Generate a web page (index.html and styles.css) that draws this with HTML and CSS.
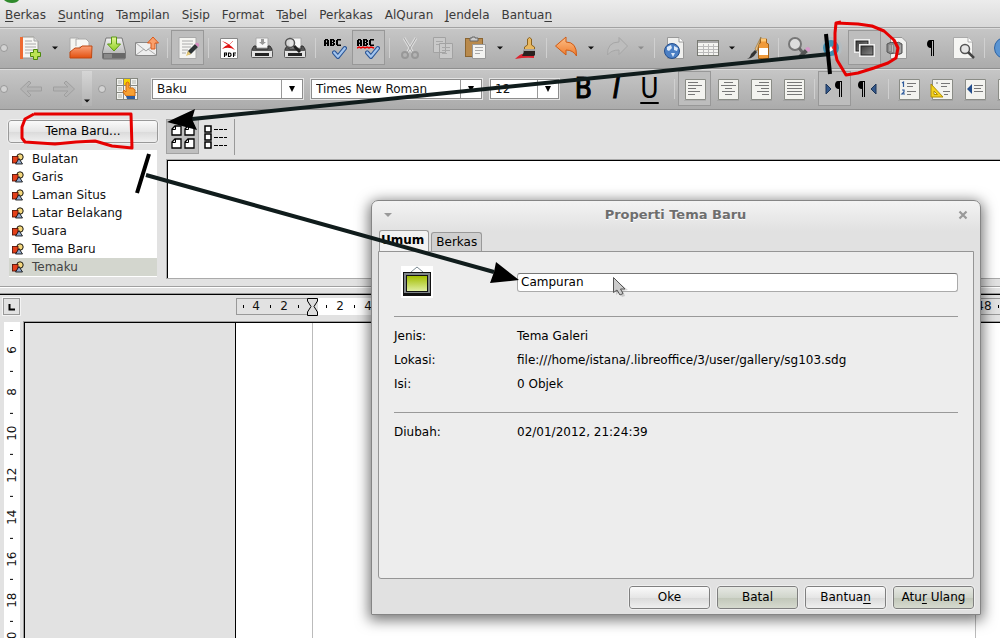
FILE: index.html
```html
<!DOCTYPE html>
<html lang="id">
<head>
<meta charset="utf-8">
<meta name="viewport" content="width=device-width, initial-scale=1">
<title>Properti Tema Baru</title>
<link rel="stylesheet" href="styles.css">
</head>
<body>
<svg class="defs" aria-hidden="true">
  <defs>
    <linearGradient id="gOrange" x1="0" y1="0" x2="0" y2="1"><stop offset="0" stop-color="#fba27a"/><stop offset="1" stop-color="#e2500f"/></linearGradient>
    <linearGradient id="gUndo" x1="0" y1="0" x2="0" y2="1"><stop offset="0" stop-color="#fcc08a"/><stop offset="1" stop-color="#ee7a2a"/></linearGradient>
    <linearGradient id="gGreen" x1="0" y1="0" x2="0" y2="1"><stop offset="0" stop-color="#e4f59a"/><stop offset="1" stop-color="#8fd022"/></linearGradient>
    <linearGradient id="gMetal" x1="0" y1="0" x2="0" y2="1"><stop offset="0" stop-color="#f2f2f2"/><stop offset="1" stop-color="#a4a4a4"/></linearGradient>
    <linearGradient id="gDark" x1="0" y1="0" x2="1" y2="1"><stop offset="0" stop-color="#3a3a3a"/><stop offset="1" stop-color="#8a8a8a"/></linearGradient>
    <linearGradient id="gLime" x1="0" y1="0" x2="0" y2="1"><stop offset="0" stop-color="#a2bd00"/><stop offset="1" stop-color="#dfeea0"/></linearGradient>
    <symbol id="shapes" viewBox="0 0 12 12"><circle cx="8" cy="4" r="3.200" fill="#f4d77c" stroke="#000" stroke-width=".9"/><rect x=".5" y="3.500" width="5.500" height="6.500" fill="#e4401a" stroke="#5a1408" stroke-width=".9"/><path d="M7 5.500L10.500 11H3.500Z" fill="#8fa8cc" stroke="#000" stroke-width=".8"/></symbol>
    <symbol id="check" viewBox="0 0 14 12"><path d="M2 6L5.500 10L12 2" fill="none" stroke="#2a5596" stroke-width="4" stroke-linecap="round" stroke-linejoin="round"/><path d="M2 6L5.500 10L12 2" fill="none" stroke="#a3c5ee" stroke-width="2" stroke-linecap="round" stroke-linejoin="round"/></symbol>
    <symbol id="abc" viewBox="0 0 18 7"><g fill="#000"><path d="M1 0H4V1H5V7H3V5H2V7H0V1H1ZM2 1.500V3.500H3V1.500Z" fill-rule="evenodd"/><path d="M6 0H10V1H11V3H10V4H11V6H10V7H6ZM8 1.500V3H9V1.500ZM8 4V5.500H9V4Z" fill-rule="evenodd"/><path d="M13 0H17V1.500H14V5.500H17V7H13V6H12V1H13Z"/></g></symbol>
    <symbol id="page" viewBox="0 0 24 24"><path d="M2.500 2.500H22.500V22.500H2.500Z" fill="#f3f3ef" stroke="#8a8c86"/><path d="M1 24H23" stroke="#000" stroke-opacity=".15"/></symbol>
    <symbol id="tri" viewBox="0 0 6 4"><path d="M0 .5H6L3 3.500Z" fill="currentColor"/></symbol>
    <symbol id="drop" viewBox="0 0 8 6"><path d="M1 0H7L4 6Z" fill="#000"/></symbol>
    <symbol id="pilcrow" viewBox="0 0 8 16"><path d="M3 0H7V16H6V1H5V16H4V8C1 8 0 6 0 4S1 0 3 0Z" fill="#000"/></symbol>
    <symbol id="printer" viewBox="0 0 24 24"><path d="M6 2H18V12H6Z" fill="#f8f8f8" stroke="#aaa"/><path d="M4 10L2 13V16H22V13L20 10H18V13H6V10Z" fill="#555" stroke="#333"/><rect x="1.500" y="14.500" width="21" height="7" rx="1" fill="#e2e2e2" stroke="#555"/><rect x="5" y="17" width="14" height="3" fill="#222"/></symbol>
    <symbol id="thumb" viewBox="0 0 11 11"><path d="M1 4L4 1H10V10H1Z" fill="#fff" stroke="#000" stroke-width="1.300"/><path d="M1 4.500H4.500V1" fill="none" stroke="#000"/></symbol>
  </defs>
</svg>

<nav class="menubar" aria-label="Menu">
  <svg class="app-mark" viewBox="0 0 18 4" aria-hidden="true"><path d="M0 0H15Q13 3 8 3T0 0Z" fill="#2f8a2c"/></svg>
  <a href="#"><u>B</u>erkas</a><a href="#"><u>S</u>unting</a><a href="#">Ta<u>m</u>pilan</a><a href="#">S<u>i</u>sip</a><a href="#">F<u>o</u>rmat</a><a href="#">T<u>a</u>bel</a><a href="#">Per<u>k</u>akas</a><a href="#">AlQuran</a><a href="#"><u>J</u>endela</a><a href="#">Bantua<u>n</u></a>
</nav>

<div class="toolbar" role="toolbar" aria-label="Standar">
  <span class="grip"></span>
  <button class="tool" aria-label="Baru"><svg viewBox="0 0 24 24"><path d="M3 1H15L19 5V22H3Z" fill="#f6f6f3" stroke="#9a9a95"/><path d="M1 1H4V23H1Z" fill="#ee6a32"/><path d="M15 1V5H19" fill="#ddd" stroke="#aaa"/><path d="M6 5H13M6 8H17M6 11H17M6 14H14M6 17H12" stroke="#aaa"/><path d="M14.500 13.500H18.500V16.500H21.500V20.500H18.500V23.500H14.500V20.500H11.500V16.500H14.500Z" fill="#bce254" stroke="#4d8a0c"/></svg></button>
  <button class="arrow" aria-label="Pilihan baru"><svg><use href="#tri"/></svg></button>
  <button class="tool" aria-label="Buka"><svg viewBox="0 0 24 24"><path d="M1 22V2H9L11 4V10" fill="#f4f4f0" stroke="#aaa"/><path d="M7 10V3H17L20 6V10" fill="#f8f8f5" stroke="#aaa"/><path d="M1 22V16L6 12H11L13 10H23L22.500 22Z" fill="url(#gOrange)" stroke="#c04812"/></svg></button>
  <button class="tool" aria-label="Simpan"><svg viewBox="0 0 24 24"><path d="M4 2H20L23.500 16V22Q23 23 22 23H2Q.5 23 .5 22V16Z" fill="url(#gMetal)" stroke="#777"/><rect x="1" y="17" width="22" height="5.500" fill="#686868"/><path d="M3 18V22M5 18V22M7 18V22M9 18V22" stroke="#aaa"/><path d="M9.500 1H14.500V8H18.500L12 15L5.500 8H9.500Z" fill="url(#gGreen)" stroke="#5a9a12"/></svg></button>
  <button class="tool" aria-label="Kirim surel"><svg viewBox="0 0 24 24"><path d="M.5 6.500H21.500V19.500H.5Z" fill="#eee" stroke="#888"/><path d="M1 19L9 13L11 15L13 13L21 19M1 7L11 15L21 7" fill="none" stroke="#aaa"/><path d="M16 13V7H12.500L18 1L23.500 7H20V13Z" fill="#f9a06c" stroke="#d95a1c"/></svg></button>
  <span class="sep"></span>
  <button class="tool on" aria-pressed="true" aria-label="Sunting berkas"><svg viewBox="0 0 24 24"><path d="M3 1.500H20V22.500H3Z" fill="#f5f5f2" stroke="#aaa"/><path d="M6 5H17M6 8H17M6 11H15M6 14H12M6 17H10" stroke="#aaa"/><path d="M11 19L12 15L19 8L22 11L15 18Z" fill="#2e3436"/><path d="M19 8L20 7Q22 6 23 8T22 11Z" fill="#d68cc0"/><path d="M10 20L12 15L15 18Z" fill="#e6c873"/></svg></button>
  <span class="sep"></span>
  <button class="tool" aria-label="Ekspor PDF"><svg viewBox="0 0 24 24"><path d="M3.500 2.500H20.500V22.500H3.500Z" fill="#fff" stroke="#888"/><path d="M5 5Q12 7 18 14Q12 10 5 13Q9 9 11 9Z" fill="#e01010"/><path d="M12 9L16 5" stroke="#e88" stroke-width="1"/><path d="M7.500 21V17H9.500V19H7.500M11.500 17V20.500H13L14 19.500V18L13 17ZM16.500 21V17H19M16.500 19H18.500" fill="none" stroke="#000" stroke-width="1.100"/></svg></button>
  <button class="tool" aria-label="Cetak"><svg viewBox="0 0 24 24"><use href="#printer"/><path d="M11 3H14V6H16L12.500 9L9 6H11Z" fill="#999"/></svg></button>
  <button class="tool" aria-label="Pratinjau"><svg viewBox="0 0 24 24"><use href="#printer"/><circle cx="7" cy="7" r="4.500" fill="#ddd" fill-opacity=".8" stroke="#555" stroke-width="1.500"/><path d="M11 10L17 16" stroke="#222" stroke-width="3"/></svg></button>
  <span class="sep"></span>
  <button class="tool" aria-label="Periksa ejaan"><svg viewBox="0 0 24 24"><use href="#abc" x="0" y="3" width="18" height="7"/><use href="#check" x="8" y="10" width="15" height="13"/></svg></button>
  <button class="tool on" aria-pressed="true" aria-label="Periksa otomatis"><svg viewBox="0 0 24 24"><use href="#abc" x="0" y="3" width="18" height="7"/><path d="M0 12L2 11L4 12L6 11L8 12L10 11L12 12L14 11L17 12" fill="none" stroke="#e00" stroke-width="1.500"/><use href="#check" x="8" y="10" width="15" height="13"/></svg></button>
  <span class="sep"></span>
  <button class="tool" disabled aria-label="Potong"><svg viewBox="0 0 24 24"><path d="M6 2L15 17M18 2L9 17" stroke="#ddd" stroke-width="3"/><path d="M6 2L15 17M18 2L9 17" stroke="#a4a4a4"/><g fill="none" stroke="#989898" stroke-width="2"><circle cx="7" cy="19" r="3"/><circle cx="17" cy="19" r="3"/></g></svg></button>
  <button class="tool" disabled aria-label="Salin"><svg viewBox="0 0 24 24"><path d="M2.500 1.500H14.500V16.500H2.500ZM8.500 7.500H21.500V22.500H8.500Z" fill="#c9c9c9" stroke="#a2a2a2"/><path d="M5 5.500H12M5 8.500H8M11 11.500H19M11 14.500H19M11 17.500H16" stroke="#a8a8a8"/></svg></button>
  <button class="tool" aria-label="Tempel"><svg viewBox="0 0 24 24"><rect x="1.500" y="2.500" width="17" height="18" fill="#b98a4c" stroke="#8a6430"/><path d="M6 4V2H8V1H11V2H14V5H6Z" fill="#ccc" stroke="#666"/><path d="M8.500 8.500H21.500V22.500H8.500Z" fill="#f4f4f2" stroke="#999"/><path d="M11 11.500H19M11 14.500H19M11 17.500H16" stroke="#aaa"/></svg></button>
  <button class="arrow" aria-label="Pilihan tempel"><svg><use href="#tri"/></svg></button>
  <button class="tool" aria-label="Kuas format"><svg viewBox="0 0 24 24"><path d="M1 23Q7 17 11 18H20V22Q12 21 1 23Z" fill="#dc2430"/><path d="M13.500 9V3Q15.500 0 17.500 3V9L20.500 11V14H10.500V11Z" fill="#e8b860" stroke="#8a6220"/><path d="M10 13H21V19L20 20H8Q10 17 10 13Z" fill="#2a2220"/><path d="M10 14H21" stroke="#ccc" stroke-width="1.500"/></svg></button>
  <span class="sep"></span>
  <button class="tool" aria-label="Batalkan"><svg viewBox="0 0 24 24"><path d="M.5 10L11 1V6Q22 6 21.500 20Q18 14 11 14V19Z" fill="url(#gUndo)" stroke="#cf5a14"/></svg></button>
  <button class="arrow" aria-label="Riwayat batal"><svg><use href="#tri"/></svg></button>
  <button class="tool" disabled aria-label="Ulangi"><svg viewBox="0 0 24 24"><path d="M22.500 10L14 1.500V6Q2 6 2.500 19Q6 14 14 14V18.500Z" fill="#bdbdbd" stroke="#a6a6a6"/></svg></button>
  <button class="arrow" disabled aria-label="Riwayat ulang"><svg><use href="#tri"/></svg></button>
  <span class="sep"></span>
  <button class="tool" aria-label="Taut"><svg viewBox="0 0 24 24"><path d="M4.500 1.500H16L20.500 6V22.500H4.500Z" fill="#f0f0ee" stroke="#999"/><path d="M16 1.500V6H20.500" fill="#fff" stroke="#999"/><circle cx="9" cy="15" r="7.500" fill="#4b7fc4" stroke="#244e8c"/><path d="M4 11L8 9L9 12L6 15L4 14ZM11 10L15 12L14 15L11 14ZM8 17L12 17L10 21Z" fill="#dce9f8"/></svg></button>
  <button class="tool" aria-label="Tabel"><svg viewBox="0 0 24 24"><rect x="1.500" y="4.500" width="21" height="15" fill="#f4f4f1" stroke="#777972"/><path d="M2 6H22" stroke="#aaa" stroke-width="2"/><path d="M2 10.500H22M2 13.500H22M2 16.500H22M7.500 8V19M12.500 8V19M17.500 8V19" stroke="#bbb"/></svg></button>
  <button class="arrow" aria-label="Pilihan tabel"><svg><use href="#tri"/></svg></button>
  <button class="tool" aria-label="Menggambar"><svg viewBox="0 0 24 24"><path d="M12.500 22.500V8L14.500 7V3H20.500V7L22.500 8V22.500Z" fill="#f09a3a" stroke="#a06018"/><path d="M13 12H22V19H13Z" fill="#fff"/><path d="M15 4H20" stroke="#ffc875" stroke-width="3"/><path d="M11 15L15 1L9 13Z" fill="#f0c080" stroke="#8a6a30" stroke-width=".6"/><path d="M1 23Q4 22 5 18L9 14L11 16L8 20Q5 23 1 23Z" fill="#333"/></svg></button>
  <span class="sep"></span>
  <button class="tool" aria-label="Cari"><svg viewBox="0 0 24 24"><circle cx="8" cy="8" r="6" fill="#dcdcdc" stroke="#777" stroke-width="2"/><path d="M12 12L16 17" stroke="#666" stroke-width="3"/><path d="M11 22L12 19L18 13L21 16L15 21Z" fill="#555"/><path d="M18 13L20 11Q24 11 23 15L21 16Z" fill="#d49ac8"/></svg></button>
  <button class="tool" aria-label="Navigator"><svg viewBox="0 0 24 24"><circle cx="11" cy="12" r="9.500" fill="#3f8fb0" stroke="#b4bcc0" stroke-width="3"/><path d="M11 12L17 6L13 14Z" fill="#e33"/><path d="M11 10L6 18L13 14Z" fill="#fff"/></svg></button>
  <button class="tool on" aria-pressed="true" aria-label="Galeri"><svg viewBox="0 0 24 24"><rect x="1.500" y="3.500" width="15" height="13" fill="#fff" stroke="#eee"/><rect x="3" y="5" width="12" height="10" fill="url(#gDark)" stroke="#222"/><rect x="6.500" y="8.500" width="15" height="12" fill="#fff" stroke="#eee"/><rect x="8" y="10" width="12" height="9" fill="url(#gDark)" stroke="#222"/></svg></button>
  <button class="tool" aria-label="Sumber data"><svg viewBox="0 0 24 24"><path d="M4.500 1.500H16L20.500 6V22.500H4.500Z" fill="#f1f1ef" stroke="#999"/><path d="M1 8Q5 5 9 7Q13 5 16 8V17Q13 20 9 17Q4 19 1 16Z" fill="#8a8a8a" stroke="#555"/><path d="M9 8V17M4 9V15M6.500 9V16M11.500 9V17M14 9V17" stroke="#bbb"/></svg></button>
  <button class="tool" aria-label="Karakter tak tercetak"><svg viewBox="0 0 24 24"><use href="#pilcrow" x="8" y="4" width="8" height="16"/></svg></button>
  <button class="tool" aria-label="Zum"><svg viewBox="0 0 24 24"><path d="M1.500 1.500H16L20.500 6V22.500H1.500Z" fill="#f5f5f3" stroke="#aaa"/><path d="M16 1.500V6H20.500" fill="#fff" stroke="#aaa"/><circle cx="13" cy="13" r="4.500" fill="#e6e6e6" stroke="#555" stroke-width="1.500"/><path d="M16 16L22 22" stroke="#444" stroke-width="2.500"/></svg></button>
  <span class="sep"></span>
  <button class="tool" aria-label="Bantuan"><svg viewBox="0 0 24 24"><circle cx="12" cy="12" r="10.500" fill="#5a94d2" stroke="#2f64a4"/></svg></button>
</div>

<div class="toolbar" role="toolbar" aria-label="Pemformatan">
  <span class="grip"></span>
  <button class="tool" disabled aria-label="Mundur"><svg viewBox="0 0 24 24"><path d="M1.500 12L10 4L12 6L8 10H22.500V14H8L12 18L10 20Z" fill="#b4b4b4" stroke="#9f9f9f"/></svg></button>
  <button class="tool" disabled aria-label="Maju"><svg viewBox="0 0 24 24"><path d="M22.500 12L14 4L12 6L16 10H1.500V14H16L12 18L14 20Z" fill="#b4b4b4" stroke="#9f9f9f"/></svg></button>
  <button class="more" aria-label="Lainnya"><svg><use href="#tri"/></svg></button>
  <span class="grip inner"></span>
  <button class="tool" aria-label="Gaya"><svg viewBox="0 0 24 24"><rect x="1.500" y="1.500" width="21" height="21" fill="#f2f2ef" stroke="#858780"/><path d="M8.500 2V22M15.500 2V22M2 8.500H22M2 15.500H22" stroke="#858780"/><g fill="#d2d4ce"><path d="M3 3H7V7H3ZM3 10H7V14H3ZM3 17H7V21H3ZM17 3H21V7H17ZM17 10H21V14H17Z"/></g><path d="M9 2H15V8H9Z" fill="#f5d400"/><path d="M11 19L8 15L9 13L11 15V6Q12.500 4 14 6V11Q18 10 20 13V19Z" fill="#f7a032" stroke="#d06a10"/><path d="M11 19H20V22H12Z" fill="#2d5a9c"/></svg></button>
  <span class="combo style"><select aria-label="Gaya paragraf"><option>Baku</option></select><svg><use href="#drop"/></svg></span>
  <span class="combo font"><select aria-label="Nama fonta"><option>Times New Roman</option></select><svg><use href="#drop"/></svg></span>
  <span class="combo size"><select aria-label="Ukuran fonta"><option>12</option></select><svg><use href="#drop"/></svg></span>
  <button class="tool glyph bold">B</button>
  <button class="tool glyph italic">I</button>
  <button class="tool glyph underline">U</button>
  <span class="sep"></span>
  <button class="tool on" aria-pressed="true" aria-label="Rata kiri"><svg viewBox="0 0 24 24"><use href="#page"/><path d="M5 5.500H15M5 8.500H19M5 11.500H13M5 14.500H17M5 17.500H12" stroke="#777"/></svg></button>
  <button class="tool" aria-label="Rata tengah"><svg viewBox="0 0 24 24"><use href="#page"/><path d="M8 5.500H17M5 8.500H20M9 11.500H16M6 14.500H19M9 17.500H16" stroke="#777"/></svg></button>
  <button class="tool" aria-label="Rata kanan"><svg viewBox="0 0 24 24"><use href="#page"/><path d="M10 5.500H20M6 8.500H20M12 11.500H20M8 14.500H20M13 17.500H20" stroke="#777"/></svg></button>
  <button class="tool" aria-label="Rata penuh"><svg viewBox="0 0 24 24"><use href="#page"/><path d="M5 5.500H20M5 8.500H20M5 11.500H20M5 14.500H20M5 17.500H20" stroke="#777"/></svg></button>
  <span class="sep"></span>
  <button class="tool on" aria-pressed="true" aria-label="Kiri ke kanan"><svg viewBox="0 0 24 24"><path d="M3 7L8 12L3 17Z" fill="#34598c" stroke="#1c3558"/><use href="#pilcrow" x="12" y="4" width="8" height="16"/></svg></button>
  <button class="tool" aria-label="Kanan ke kiri"><svg viewBox="0 0 24 24"><path d="M20 7L15 12L20 17Z" fill="#34598c" stroke="#1c3558"/><use href="#pilcrow" x="2" y="4" width="8" height="16"/></svg></button>
  <span class="sep"></span>
  <button class="tool" aria-label="Penomoran"><svg viewBox="0 0 24 24"><use href="#page"/><path d="M5 6L6.500 5V10M5 13H7V15L5 17H8" fill="none" stroke="#2d5a9c" stroke-width="1.200"/><path d="M10 6.500H19M10 9.500H16M10 14.500H19M10 17.500H14" stroke="#777"/></svg></button>
  <button class="tool" aria-label="Bulir"><svg viewBox="0 0 24 24"><use href="#page"/><path d="M11 6.500H20M11 9.500H17M13 14.500H20M14 17.500H18M6 6H8" stroke="#777"/><path d="M1 7V20H13ZM4 14V17.500H7.500Z" fill="#f4d21c" fill-rule="evenodd" stroke="#b18f05"/></svg></button>
  <button class="tool" aria-label="Kurangi indentasi"><svg viewBox="0 0 24 24"><use href="#page"/><path d="M9 7V17L4 12Z" fill="#244e8c"/><path d="M11 8.500H20M11 11.500H18M11 14.500H20" stroke="#777"/></svg></button>
  <button class="tool" aria-label="Tambah indentasi"><svg viewBox="0 0 24 24"><use href="#page"/></svg></button>
</div>

<section class="gallery" aria-label="Galeri">
  <div class="themes">
    <button class="push new-theme">Tema Baru...</button>
    <ul class="theme-list">
      <li><svg><use href="#shapes"/></svg>Bulatan</li>
      <li><svg><use href="#shapes"/></svg>Garis</li>
      <li><svg><use href="#shapes"/></svg>Laman Situs</li>
      <li><svg><use href="#shapes"/></svg>Latar Belakang</li>
      <li><svg><use href="#shapes"/></svg>Suara</li>
      <li><svg><use href="#shapes"/></svg>Tema Baru</li>
      <li class="selected"><svg><use href="#shapes"/></svg>Temaku</li>
    </ul>
  </div>
  <div class="browser">
    <div class="views">
      <button class="view on" aria-pressed="true" aria-label="Tampilan ikon"><svg viewBox="0 0 26 26"><use href="#thumb" x="1" y="1" width="11" height="11"/><use href="#thumb" x="14" y="1" width="11" height="11"/><use href="#thumb" x="1" y="14" width="11" height="11"/><use href="#thumb" x="14" y="14" width="11" height="11"/></svg></button>
      <button class="view" aria-label="Tampilan rinci"><svg viewBox="0 0 26 26"><path d="M2 2H8V8H2ZM2 10H8V16H2ZM2 18H8V24H2Z" fill="#fff" stroke="#000" stroke-width="1.500"/><path d="M11 5.500H24M11 13.500H24M11 21.500H24" stroke="#000" stroke-dasharray="4 1"/></svg></button>
      <span class="rule"></span>
    </div>
    <div class="preview"></div>
  </div>
</section>
<div class="splitter"></div>

<main class="editor">
  <button class="corner" aria-label="Tabulasi"><svg viewBox="0 0 8 8"><path d="M1.500 1V6.500H7" fill="none" stroke="#000" stroke-width="2"/></svg></button>
  <div class="hruler">
    <div class="margin"><i></i><b>4</b><i></i><b>2</b><i></i></div>
    <svg class="indent" viewBox="0 0 11 18"><path d="M.5.5H10.500V3L7 8.500L10.500 14V17.500H.5V14L4 8.500L.5 3Z" fill="#ddd" stroke="#000"/></svg>
    <div class="measure"><i></i><b>2</b><i></i><b>4</b></div>
    <div class="margin end"><b>48</b><i></i></div>
  </div>
  <div class="vruler"><i class="first"></i><b>6</b><i></i><b>8</b><i></i><b>10</b><i></i><b>12</b><i></i><b>14</b><i></i><b>16</b><i></i><b>18</b><i></i><b class="last"><span>20</span></b></div>
  <div class="canvas"><div class="sheet"><div class="text-area"></div></div></div>
</main>

<section class="dialog" role="dialog" aria-labelledby="dlg-title">
  <header class="titlebar">
    <button aria-label="Menu jendela"><svg viewBox="0 0 10 10"><path d="M1 3H9L5 7Z" fill="#999"/></svg></button>
    <h1 id="dlg-title">Properti Tema Baru</h1>
    <button aria-label="Tutup"><svg viewBox="0 0 10 10"><path d="M1.500 1.500L8.500 8.500M8.500 1.500L1.500 8.500" stroke="#999" stroke-width="2.200"/></svg></button>
  </header>
  <div class="tabs" role="tablist">
    <button class="tab active" role="tab" aria-selected="true">Umum</button>
    <button class="tab" role="tab" aria-selected="false">Berkas</button>
  </div>
  <div class="pane">
    <div class="name-row">
      <svg class="picture" viewBox="0 0 32 32"><rect width="32" height="32" fill="#fff"/><path d="M10 6L16 1L22 6" fill="none" stroke="#7b8a92"/><rect x="2" y="6" width="28" height="24" fill="#111"/><rect x="3" y="7" width="26" height="20" fill="#80868a"/><rect x="5" y="9" width="22" height="17" fill="#111"/><rect x="6" y="10" width="20" height="15" fill="url(#gLime)"/></svg>
      <input type="text" value="Campuran" aria-label="Nama tema">
    </div>
    <dl class="facts"><dt>Jenis:</dt><dd>Tema Galeri</dd><dt>Lokasi:</dt><dd>file:///home/istana/.libreoffice/3/user/gallery/sg103.sdg</dd><dt>Isi:</dt><dd>0 Objek</dd></dl>
    <dl class="facts"><dt>Diubah:</dt><dd>02/01/2012, 21:24:39</dd></dl>
  </div>
  <footer class="actions">
    <button class="push">Oke</button>
    <button class="push tinted">Batal</button>
    <button class="push">Bantua<u>n</u></button>
    <button class="push tinted">Atu<u>r</u> Ulang</button>
  </footer>
</section>

<svg class="notes" viewBox="0 0 1000 638" aria-hidden="true">
  <path d="M830 54L192 119M146 175L494 272" stroke="#101c1c" stroke-width="4"/>
  <path d="M826 34L830 74M149 154L137 193" stroke="#000" stroke-width="4"/>
  <path d="M167 122L195 109L192 119L197 130ZM519 280L496 262L494 272L490 283Z" fill="#000"/>
  <g fill="none" stroke="#e60000" stroke-width="3" stroke-linejoin="round">
    <path d="M841 22L836 23L835 33V51L837 60L840 65L846 75L858 73L874 68L888 63L896 58L898 48L894 40L884 31L872 26L858 24L836 23"/>
    <path d="M34 114L131 114L132 148L112 146L95 141L76 142L55 144L40 143L25 142L22 138L22 127L25 119L34 114"/>
  </g>
  <path d="M616 280V295L619 292L622 297L625 296L623 291L628 290Z" fill="#777" fill-opacity=".3"/>
  <path d="M613.500 277.500V292.500L617 290L620 295L623 293.500L620.500 289H625Z" fill="#ccc" stroke="#555"/>
</svg>
</body>
</html>
```
FILE: styles.css
```css
* { box-sizing: border-box; }

html { height: 100%; }

body {
  margin: 0;
  min-height: 100%;
  height: 100vh;
  display: flex;
  flex-direction: column;
  position: relative;
  overflow: hidden;
  background: #e2e2e2;
  color: #111;
  font: 12px/18px "DejaVu Sans", sans-serif;
}

button, input, select { font: inherit; color: inherit; margin: 0; }
button { padding: 0; border: 0; background: none; }
svg { display: block; }
.defs { position: absolute; width: 0; height: 0; }

.menubar {
  flex: none;
  position: relative;
  display: flex;
  gap: 12px;
  height: 28px;
  padding: 6px 5px 0;
  background: linear-gradient(#ececec, #d9d9d9);
  border-bottom: 1px solid #a2a2a2;
}
.menubar a { color: #3a3a3a; text-decoration: none; }
.app-mark { position: absolute; left: 4px; top: 0; width: 18px; height: 4px; }
u { text-underline-offset: 2px; }

.toolbar {
  flex: none;
  display: flex;
  align-items: center;
  height: 41px;
  padding-bottom: 2px;
  border-top: 1px solid #dcdcdc;
  border-bottom: 1px solid #8e8e8e;
  background: linear-gradient(#c6c6c6, #ababab);
  overflow: hidden;
}
.toolbar > * { flex: none; }
.grip { width: 14px; }
.grip::before {
  content: "";
  display: block;
  width: 6px;
  height: 6px;
  border-radius: 50%;
  background: #d2d2d2;
  border: 1px solid #989898;
}
.grip.inner { width: 12px; margin-left: 6px; }
.tool {
  width: 33px;
  height: 35px;
  display: flex;
  align-items: center;
  justify-content: center;
}
.tool svg { width: 24px; height: 24px; }
.tool.on { background: #bdbdbd; border: 1px solid #989898; }
.arrow { width: 17px; height: 35px; padding-left: 5px; color: #111; }
.arrow:disabled { color: #8c8c8c; }
.arrow svg, .more svg { width: 6px; height: 4px; }
.sep { width: 8px; height: 20px; }
.sep::before { content: ""; display: block; width: 1px; height: 20px; margin-left: 4px; background: #d0d0d0; }
.more {
  width: 10px;
  height: 35px;
  margin-left: 2px;
  padding: 24px 2px 0;
  background: linear-gradient(#d6d6d6, #b2b2b2);
}

.combo {
  position: relative;
  height: 20px;
  margin-right: 8px;
  border: 1px solid #8c8c8c;
  outline: 1px solid #e4e4e4;
  background: #fff;
}
.combo select {
  appearance: none;
  width: 100%;
  height: 18px;
  padding: 0 22px 0 4px;
  border: 0;
  border-radius: 0;
  background: none;
}
.combo svg { position: absolute; right: 6px; top: 6px; width: 8px; height: 6px; }
.combo::after {
  content: "";
  position: absolute;
  right: 20px;
  top: 0;
  bottom: 0;
  width: 1px;
  background: #999;
}
.combo.style { width: 151px; margin-left: 9px; }
.combo.font { width: 171px; }
.combo.size { width: 69px; }

.glyph { font-family: "DejaVu Sans Condensed", "DejaVu Sans", sans-serif; font-size: 28px; line-height: 35px; color: #000; }
.bold, .italic { -webkit-text-stroke: 1px #000; }
.italic { font-style: oblique; }
.underline { text-decoration: underline 2px; text-underline-offset: 4px; margin-right: 4px; }

.gallery {
  flex: none;
  display: grid;
  grid-template-columns: 150px 1fr;
  gap: 8px;
  height: 176px;
  padding: 9px 0 8px 8px;
}
.push {
  height: 23px;
  padding-bottom: 2px;
  border: 1px solid #7f7f7f;
  border-radius: 3px;
  outline: 1px solid #efefef;
  background: linear-gradient(#fafafa, #e6e6e6 50%, #dadada 51%, #efefef);
  color: #000;
}
.push.tinted { background: linear-gradient(#e6e8e3, #d0d5cb 50%, #c1c7b9 51%, #d6dacf); }
.themes { display: flex; flex-direction: column; gap: 7px; padding-top: 1px; }
.new-theme { width: 100%; border-color: #999; }
.theme-list { margin: 0 1px; padding: 0 0 1px; list-style: none; background: #fff; }
.theme-list li { display: flex; align-items: center; gap: 8px; padding-left: 3px; height: 18px; }
.theme-list svg { width: 12px; height: 12px; }
.theme-list .selected { background: #d3d6ce; color: #444; }

.browser { display: flex; flex-direction: column; gap: 5px; }
.views { display: flex; height: 36px; }
.view { width: 33px; height: 35px; display: flex; align-items: center; justify-content: center; }
.view svg { width: 26px; height: 26px; }
.view.on { background: #bfbfbf; border: 1px solid #a2a2a2; }
.rule { width: 1px; margin-left: 2px; background: #999; }
.preview { flex: 1; margin-left: 1px; background: #fff; border: solid #000; border-width: 1px 0 0 1px; outline: 1px solid #aaa; }

.splitter { flex: none; height: 9px; border: solid #000; border-width: 0 0 1px; box-shadow: inset 0 1px #a0a0a0, inset 0 2px #fff, inset 0 -1px #999; }

.editor {
  flex: 1;
  min-height: 0;
  display: grid;
  grid-template: 18px 1fr / 18px 1fr;
  gap: 6px 3px;
  padding: 3px 0 0 3px;
}
.corner { width: 17px; height: 17px; display: flex; align-items: center; justify-content: center; border: 1px solid #999; outline: 1px solid #f4f4f4; }
.corner svg { width: 8px; height: 8px; }
.hruler { display: flex; height: 17px; padding-left: 212px; line-height: 17px; }
.hruler b, .hruler i { flex: none; width: 14px; display: flex; justify-content: center; align-items: center; }
.hruler i::before { content: ""; width: 1px; height: 3px; background: #000; }
b, i { font-weight: normal; font-style: normal; }
.margin { display: flex; flex: none; width: 71px; border: 1px solid #999; border-right: 0; }
.margin i:first-child { width: 12px; }
.indent { flex: none; width: 11px; height: 18px; }
.measure { flex: 1; display: flex; padding-left: 1px; background: #fff; }
.margin.end { width: 24px; overflow: hidden; }
.vruler { margin-left: 1px; width: 16px; display: flex; flex-direction: column; background: #fff; overflow: hidden; }
.vruler b, .vruler i { flex: 1 1 0; min-height: 0; display: flex; align-items: center; justify-content: center; writing-mode: vertical-rl; transform: rotate(180deg); line-height: 16px; }
.vruler i::before { content: ""; width: 3px; height: 1px; background: #000; }
.vruler .first { flex: 0 0 18px; }
.vruler .last { flex: 0 0 6px; justify-content: flex-end; overflow: hidden; }
.canvas { padding-left: 210px; border: solid #000; border-width: 1px 0 0 1px; outline: 1px solid #a0a0a0; }
.sheet { height: 100%; background: #fff; border-left: 1px solid #000; padding: 0 24px 0 76px; }
.text-area { height: 100%; border: solid #bbb; border-width: 0 1px; }

.dialog {
  position: absolute;
  left: 371px;
  right: 19px;
  top: 200px;
  padding: 0 6px 5px;
  border: 1px solid #858585;
  border-radius: 7px 7px 0 0;
  background: linear-gradient(#f3f3f3, #e1e1e1 30px);
  box-shadow: 0 3px 14px 2px rgba(0, 0, 0, .55);
}
.titlebar { display: flex; align-items: center; height: 30px; padding: 0 6px 2px 5px; }
.titlebar svg { width: 10px; height: 10px; }
.titlebar h1 { flex: 1; margin: 0; text-align: center; font-size: 13px; color: #6e6e6e; text-shadow: 0 1px #fff; }
.tabs { display: flex; align-items: flex-end; gap: 2px; height: 20px; padding-left: 1px; }
.tab { height: 19px; padding: 0 4px 2px; border: 1px solid #999; border-bottom: 0; border-radius: 3px 3px 0 0; background: #cfcfcf; color: #000; }
.tab.active { height: 21px; padding: 0 4px 2px 1px; background: #f2f2f2; font-weight: bold; }
.pane { height: 328px; padding: 14px 15px; border: 1px solid #959595; border-radius: 0 0 3px 3px; background: #ededed; }
.name-row { display: grid; grid-template-columns: 123px 1fr; align-items: center; height: 50px; padding-bottom: 20px; }
.picture { width: 32px; height: 32px; margin-left: 7px; }
.name-row input { width: 100%; height: 19px; padding: 0 3px 1px; border: 1px solid #aaa; border-top-color: #777; border-radius: 3px; background: #fff; color: #000; }
.facts { display: grid; grid-template-columns: 123px 1fr; grid-auto-rows: 24px; align-content: start; margin: 0; padding-top: 7px; height: 96px; border-top: 1px solid #999; line-height: 24px; color: #000; }
.facts dd { margin: 0; }
.actions { display: flex; justify-content: flex-end; gap: 7px; padding-top: 7px; }
.actions .push { width: 81px; height: 23px; }

.notes { position: absolute; left: 0; top: 0; width: 1000px; height: 638px; pointer-events: none; }
```
